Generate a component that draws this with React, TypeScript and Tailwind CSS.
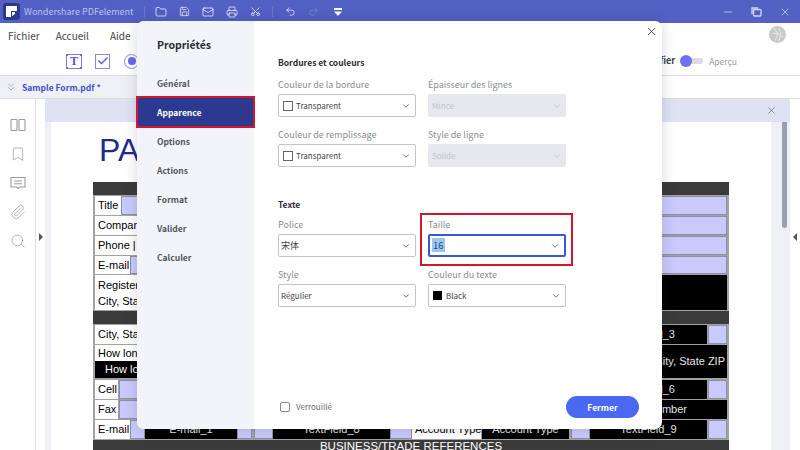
import {
  Bookmark,
  Check,
  ChevronDown,
  ChevronsDown,
  Folder,
  Mail,
  Minus,
  Paperclip,
  Printer,
  Redo2,
  Save,
  Scissors,
  Search,
  Undo2,
  X,
} from "lucide-react";
import type { ReactNode } from "react";

const purple = "bg-[#c9c9fb] border border-[#8d8da8]";
const nav = ["Général", "Apparence", "Options", "Actions", "Format", "Valider", "Calculer"];

function Label({ w, children }: { w: string; children: ReactNode }) {
  return (
    <div className={`${w} shrink-0 bg-white pl-[3px] flex items-center whitespace-nowrap overflow-hidden`}>
      {children}
    </div>
  );
}

function Black({ className, children }: { className: string; children?: ReactNode }) {
  return (
    <div className={`${className} bg-black text-[#e4e4e4] flex items-center justify-center whitespace-nowrap`}>
      {children}
    </div>
  );
}

function DarkBar({ h, children }: { h: string; children?: ReactNode }) {
  return (
    <div className={`${h} -mx-[1px] w-[636px] bg-[#3b3b3b] text-white text-[11.5px] text-center leading-[13px] shrink-0`}>
      {children}
    </div>
  );
}

function PdfTable() {
  return (
    <div className="w-[636px] pl-[1px] pr-[2px] flex flex-col gap-[1px] bg-[#a3a3a3] font-['Liberation_Sans',sans-serif] text-[11px] text-black">
      <DarkBar h="h-[13px]" />
      <div className="flex h-[19px] pl-[1px]">
        <Label w="w-[26px]">Title</Label>
        <div className={`${purple} flex-1`} />
      </div>
      <div className="flex h-[19px] pl-[1px]">
        <Label w="w-[60px]">Company</Label>
        <div className={`${purple} flex-1`} />
      </div>
      <div className="flex h-[19px] pl-[1px]">
        <Label w="w-[60px]">Phone |</Label>
        <div className={`${purple} flex-1`} />
      </div>
      <div className="flex h-[18px] pl-[1px]">
        <Label w="w-[35px]">E-mail</Label>
        <div className={`${purple} flex-1`} />
      </div>
      <div className="flex h-[35px] pl-[1px]">
        <div className="w-[160px] bg-white pl-[3px] flex flex-col justify-center leading-[16px]">
          <span>Registered Address</span>
          <span>City, State ZIP</span>
        </div>
        <Black className="flex-1" />
      </div>
      <DarkBar h="h-[13px]" />
      <div className="flex h-[19px] pl-[1px] gap-[1px]">
        <Label w="w-[160px]">City, State ZIP</Label>
        <Black className="flex-1 justify-end pr-[32px]">TextField_3</Black>
        <div className={`${purple} w-[19px]`} />
      </div>
      <div className="flex h-[33px] pl-[1px]">
        <div className="w-[160px] flex flex-col">
          <div className="h-[16px] bg-white pl-[3px] leading-[16px]">How long at</div>
          <div className="h-[17px] bg-black text-white pl-[10px] leading-[17px]">How long at</div>
        </div>
        <Black className="flex-1 justify-end pr-[2px]">City, State ZIP</Black>
      </div>
      <div className="flex h-[19px] pl-[1px] gap-[1px] mt-[1px]">
        <Label w="w-[23px]">Cell</Label>
        <div className={`${purple} w-[300px]`} />
        <Black className="flex-1 justify-end pr-[32px]">TextField_6</Black>
        <div className={`${purple} w-[19px]`} />
      </div>
      <div className="flex h-[19px] pl-[1px] gap-[1px]">
        <Label w="w-[23px]">Fax</Label>
        <div className={`${purple} w-[300px]`} />
        <Black className="flex-1 justify-end pr-[40px]">Number</Black>
      </div>
      <div className="flex h-[19px] pl-[1px]">
        <Label w="w-[35px]">E-mail</Label>
        <div className={`${purple} w-[15px]`} />
        <Black className="w-[92px]">E-mail_1</Black>
        <div className={`${purple} w-[15px]`} />
        <div className={`${purple} w-[19px] ml-[2px]`} />
        <Black className="w-[117px]">TextField_8</Black>
        <div className={`${purple} w-[22px]`} />
        <Label w="w-[69px]">Account Type</Label>
        <Black className="w-[87px] ml-[1px]">Account Type</Black>
        <div className={`${purple} w-[19px] ml-[2px]`} />
        <Black className="flex-1">TextField_9</Black>
        <div className={`${purple} w-[19px] ml-[1px]`} />
      </div>
      <DarkBar h="h-[13px]">BUSINESS/TRADE REFERENCES</DarkBar>
    </div>
  );
}

function SelectField({
  label,
  value,
  swatch,
  disabled,
  focused,
}: {
  label: string;
  value: ReactNode;
  swatch?: "empty" | "black";
  disabled?: boolean;
  focused?: boolean;
}) {
  const box = disabled
    ? "bg-[#e7e8ed] text-[#c3c5cb] pl-[4px]"
    : focused
      ? "bg-white border-2 border-[#3558d8] text-[#333] pl-[2px]"
      : "bg-white border-[1.5px] border-[#c4c5c9] text-[#444] pl-[2px]";
  return (
    <div className="flex flex-col">
      <span className="h-[14px] text-[9px] leading-[10px] text-[#8b8d94] whitespace-nowrap">{label}</span>
      <div className={`${box} h-[23px] rounded-[2px] flex items-center pr-[4px] text-[8px]`}>
        {swatch === "empty" && <span className="w-[10px] h-[10px] border border-[#666] ml-[2px] mr-[3px]" />}
        {swatch === "black" && <span className="w-[9px] h-[9px] bg-black ml-[2px] mr-[4px]" />}
        <span className="flex-1 leading-[14px]">{value}</span>
        <ChevronDown size={10} strokeWidth={2} className={disabled ? "text-[#c3c5cb]" : "text-[#555]"} />
      </div>
    </div>
  );
}

function PropertiesDialog() {
  return (
    <div className="absolute left-[137px] top-[21px] w-[525px] h-[408px] flex bg-white rounded-[7px] shadow-[0_0_14px_rgba(40,40,70,0.18)] font-['Noto_Sans_CJK_SC',sans-serif]">
      <div className="w-[117px] bg-[#f3f4f9] rounded-l-[7px] flex flex-col">
        <div className="pl-[20px] pt-[14px] h-[47px] text-[10.5px] leading-[20px] font-bold text-[#2c2c33]">Propriétés</div>
        {nav.map((item) =>
          item === "Apparence" ? (
            <div
              key={item}
              className="h-[32px] -my-[1.5px] -ml-[1px] -mr-[1px] pl-[19px] pt-[1px] flex items-center border-[2.5px] border-[#d8142c] bg-[#2b3a90] text-[8.5px] font-bold text-white relative"
            >
              {item}
            </div>
          ) : (
            <div key={item} className="h-[29px] pl-[20px] pt-[2px] flex items-center text-[8.5px] font-bold text-[#55565c]">
              {item}
            </div>
          ),
        )}
      </div>

      <div className="flex-1 pl-[24px] pr-[23px] pt-[34px] pb-[11px] flex flex-col relative">
        <X size={13} strokeWidth={1.5} className="absolute right-[4px] top-[4px] text-[#333]" />
        <div className="h-[14px] mb-[11px] text-[8.5px] font-bold text-[#2c2c33] leading-[14px]">Bordures et couleurs</div>
        <div className="grid grid-cols-[138px_138px] gap-x-[12px] gap-y-[13px]">
          <SelectField label="Couleur de la bordure" value="Transparent" swatch="empty" />
          <SelectField label="Épaisseur des lignes" value="Mince" disabled />
          <SelectField label="Couleur de remplissage" value="Transparent" swatch="empty" />
          <SelectField label="Style de ligne" value="Solide" disabled />
        </div>
        <div className="h-[14px] mt-[30px] mb-[9px] text-[8.5px] font-bold text-[#2c2c33] leading-[14px]">Texte</div>
        <div className="grid grid-cols-[138px_138px] gap-x-[12px] gap-y-[13px]">
          <SelectField label="Police" value={<span className="text-[9px]">宋体</span>} />
          <div className="relative">
            <SelectField
              label="Taille"
              value={<span className="bg-[#9cc6ef] text-[#25507a] text-[9.5px] px-[1px]">16</span>}
              focused
            />
            <div className="absolute -left-[8px] -right-[7px] -top-[7px] -bottom-[9px] border-[2.5px] border-[#d8142c] pointer-events-none" />
          </div>
          <SelectField label="Style" value="Régulier" />
          <SelectField label="Couleur du texte" value="Black" swatch="black" />
        </div>
        <div className="mt-auto flex items-center justify-between">
          <label className="flex items-center pl-[2px] text-[8px] text-[#6b6c72]">
            <span className="w-[10px] h-[10px] rounded-[2px] border border-[#888] mr-[6px]" />
            Verrouillé
          </label>
          <button type="button" className="w-[73px] h-[22px] rounded-full bg-[#4a68f0] text-white text-[8.5px] font-bold">
            Fermer
          </button>
        </div>
      </div>
    </div>
  );
}

export default function App() {
  return (
    <div className="relative w-[800px] h-[450px] overflow-hidden bg-white flex flex-col font-['Noto_Sans_CJK_SC',sans-serif]">
      {/* title bar */}
      <div className="h-[23px] shrink-0 bg-[#5360c4] flex items-center text-white">
        <div className="w-[17px] h-[17px] ml-[3px] rounded-[3px] bg-[#2c3a8e] flex items-center justify-center">
          <svg width="11" height="11" viewBox="0 0 11 11">
            <path d="M0 0H11V5H5V11H0Z" fill="#fff" />
            <path d="M6 6H9V8L6 10Z" fill="#fff" />
          </svg>
        </div>
        <span className="ml-[4px] w-[111px] text-[9px] text-[#bcc2ec] whitespace-nowrap">Wondershare PDFelement</span>
        <span className="ml-[9px] w-px h-[10px] bg-[#6d79d0]" />
        <div className="ml-[10px] flex items-center gap-[12px]">
          <Folder size={12} strokeWidth={1.5} />
          <Save size={11} strokeWidth={1.5} />
          <Mail size={12} strokeWidth={1.5} />
          <Printer size={12} strokeWidth={1.5} />
          <Scissors size={11} strokeWidth={1.5} className="-rotate-90" />
        </div>
        <span className="ml-[11px] w-px h-[10px] bg-[#6d79d0]" />
        <div className="ml-[12px] flex items-center gap-[12px]">
          <Undo2 size={11} strokeWidth={1.5} />
          <Redo2 size={11} strokeWidth={1.5} className="text-[#7d88d6]" />
          <svg width="10" height="10" viewBox="0 0 10 10" fill="#fff" className="ml-[2px]">
            <rect x="1" y="1" width="8" height="2" />
            <path d="M1 4.5H9L5 9Z" />
          </svg>
        </div>
        <div className="ml-auto flex items-center gap-[17px] pr-[9px] text-[#d5d9f3]">
          <Minus size={12} strokeWidth={1.5} />
          <svg width="11" height="10" viewBox="0 0 11 10" fill="none" stroke="currentColor" strokeWidth="1.3">
            <rect x="2.5" y="2.5" width="7.5" height="6.5" rx="1" />
            <path d="M1 7V1H7" />
          </svg>
          <X size={12} strokeWidth={1.5} />
        </div>
      </div>

      {/* menu */}
      <div className="h-[24px] shrink-0 flex items-center pl-[8px] text-[10px] text-[#444]">
        <span>Fichier</span>
        <span className="ml-[16px]">Accueil</span>
        <span className="ml-[21px]">Aide</span>
        <svg width="17" height="17" viewBox="0 0 17 17" className="ml-auto mr-[14px] -mt-[2px]">
          <circle cx="8.5" cy="8.5" r="8.5" fill="#c9c9c9" />
          <path d="M5 2L9 8L6 14M10 2L12 8L10 15M3 7L9 8L14 11" stroke="#e8e8e8" strokeWidth="1" fill="none" />
        </svg>
      </div>

      {/* toolbar */}
      <div className="h-[29px] shrink-0 flex items-center text-[#6b6bd8] border-b border-[#dcdce2]">
        <div className="relative ml-[66px] w-[16px] h-[15px] border border-[#7a7adf] flex items-center justify-center font-['Liberation_Serif',serif] font-bold text-[12px] text-[#5a5ac8]">
          T
          <span className="absolute -left-[1px] -top-[1px] w-[2px] h-[2px] bg-[#6b6bd8]" />
          <span className="absolute -right-[1px] -top-[1px] w-[2px] h-[2px] bg-[#6b6bd8]" />
          <span className="absolute -left-[1px] -bottom-[1px] w-[2px] h-[2px] bg-[#6b6bd8]" />
          <span className="absolute -right-[1px] -bottom-[1px] w-[2px] h-[2px] bg-[#6b6bd8]" />
        </div>
        <div className="ml-[13px] w-[15px] h-[15px] border border-[#8a8adf] flex items-center justify-center">
          <Check size={12} strokeWidth={3.5} />
        </div>
        <div className="ml-[14px] w-[15px] h-[15px] rounded-full border border-[#8a8adf] flex items-center justify-center">
          <span className="w-[8px] h-[8px] rounded-full bg-[#6b6be0]" />
        </div>
        <span className="ml-auto text-[9px] font-semibold text-[#444] mr-[6px]">Modifier</span>
        <div className="relative w-[22px] h-[6px] rounded-full bg-[#dcdce0] mr-[6px]">
          <span className="absolute -left-[1px] -top-[3px] w-[12px] h-[12px] rounded-full bg-[#6f70ee]" />
        </div>
        <span className="mr-[63px] text-[8.5px] text-[#9a9aa0]">Aperçu</span>
      </div>

      {/* tab bar */}
      <div className="h-[23px] shrink-0 flex border-b border-[#dcdce2]">
        <div className="w-[220px] bg-[#eff0f5] flex items-center pl-[5px] text-[8.5px] font-bold text-[#4052d0]">
          <ChevronsDown size={12} strokeWidth={1.5} className="text-[#9a9aa5] mr-[5px]" />
          Sample Form.pdf *
        </div>
      </div>

      {/* workspace */}
      <div className="flex-1 min-h-0 flex">
        <div className="w-[36px] shrink-0 border-r border-[#e0e0e6] flex flex-col items-center pt-[18px] gap-[13px] text-[#9a9aa2]">
          <svg width="16" height="16" viewBox="0 0 16 16" fill="none" stroke="currentColor" strokeWidth="1.1">
            <rect x="1" y="2.5" width="6" height="11" rx="0.6" />
            <rect x="9" y="2.5" width="6" height="11" rx="0.6" />
          </svg>
          <Bookmark size={16} strokeWidth={1.1} />
          <svg width="16" height="16" viewBox="0 0 16 16" fill="none" stroke="currentColor" strokeWidth="1.1">
            <path d="M1 2.5H15V12H9.5L8 13.5L6.5 12H1Z" />
            <path d="M4 6H12M4 8.8H12" />
          </svg>
          <Paperclip size={16} strokeWidth={1.1} />
          <Search size={16} strokeWidth={1.1} />
        </div>
        <div className="w-[9px] shrink-0 flex items-center justify-center pb-[75px]">
          <span className="w-0 h-0 border-y-[4px] border-y-transparent border-l-[4px] border-l-[#555]" />
        </div>
        <div className="w-[745px] shrink-0 flex flex-col min-h-0">
          <div className="h-[23px] shrink-0 bg-[#dfe2f3] flex items-center justify-end pr-[13px]">
            <X size={11} strokeWidth={1.5} className="text-[#666]" />
          </div>
          <div className="flex-1 min-h-0 flex">
            <div className="w-[6px] bg-[#eff0f6]" />
            <div className="w-[720px] bg-white pl-[42px] overflow-hidden">
              <div className="h-[60px] pt-[8px] pl-[6px] text-[32px] leading-[40px] text-[#1c2c8c] font-['Liberation_Sans',sans-serif]">
                PA
              </div>
              <PdfTable />
            </div>
            <div className="w-[19px] bg-[#eff0f5] pl-[11px]">
              <div className="w-[5px] h-[106px] rounded-b-full bg-[#9b9eaf]" />
            </div>
          </div>
        </div>
        <div className="flex-1 flex items-center justify-center pb-[75px]">
          <span className="w-0 h-0 border-y-[4px] border-y-transparent border-r-[4px] border-r-[#555]" />
        </div>
      </div>

      <PropertiesDialog />
    </div>
  );
}
